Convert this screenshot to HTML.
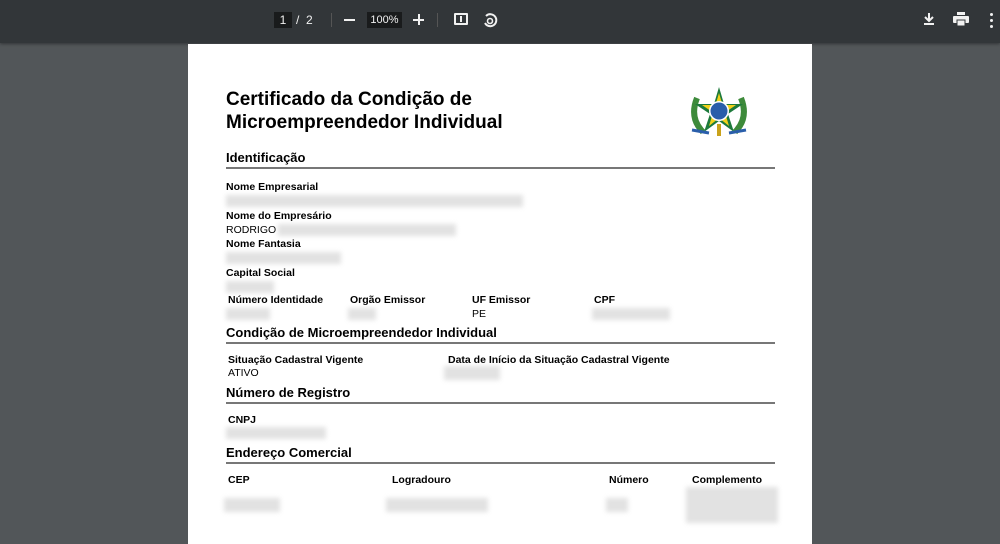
<!DOCTYPE html>
<html><head><style>
*{margin:0;padding:0;box-sizing:border-box}
body{width:1000px;height:524px;overflow:hidden;background:#525659;font-family:"Liberation Sans",Arial,sans-serif;position:relative}
.tb{position:absolute;left:0;top:0;width:1000px;height:43px;background:#323639;box-shadow:0 1px 3px rgba(0,0,0,.4);color:#f1f1f1;font-size:12px}
.tb div{position:absolute}
.page{position:absolute;left:188px;top:44px;width:624px;height:500px;background:#fff}
.a{position:absolute;white-space:nowrap;color:#000}
.h{font-weight:bold;font-size:13px}
.l{font-weight:bold;font-size:10.5px}
.v{font-size:10.5px}
.hr{position:absolute;left:38px;width:549px;height:2px;background:#777}
.b{position:absolute;background:#e2e2e2;filter:blur(2.5px);height:12px}
</style></head><body>
<div class="tb">
<div style="left:274px;top:12px;width:18px;height:16px;background:#191b1c;text-align:center;line-height:16px">1</div>
<div style="left:296px;top:12px;line-height:16px">/&nbsp;&nbsp;2</div>
<div style="left:331px;top:13px;width:1px;height:14px;background:#555"></div>
<div style="left:344px;top:19px;width:11px;height:2px;background:#f1f1f1"></div>
<div style="left:367px;top:12px;width:35px;height:16px;background:#191b1c;text-align:center;line-height:16px;font-size:11px">100%</div>
<div style="left:413px;top:19px;width:11px;height:2px;background:#f1f1f1"></div>
<div style="left:417.5px;top:14px;width:2px;height:11px;background:#f1f1f1"></div>
<div style="left:437px;top:13px;width:1px;height:14px;background:#555"></div>
<div style="left:454px;top:13px;width:14px;height:12px;border:2px solid #f1f1f1;border-radius:1px"></div>
<div style="left:460px;top:16px;width:2px;height:6px;background:#f1f1f1"></div>
<svg style="position:absolute;left:481px;top:11px" width="18" height="18" viewBox="0 0 18 18"><path d="M5 5 A6 6 0 1 1 4 12" fill="none" stroke="#f1f1f1" stroke-width="2"/><circle cx="9" cy="10" r="2.5" fill="none" stroke="#f1f1f1" stroke-width="1.6"/></svg>
<svg style="position:absolute;left:922px;top:12px" width="14" height="14" viewBox="0 0 14 14"><path d="M7 1v8M3 5l4 4 4-4M2 12h10" fill="none" stroke="#f1f1f1" stroke-width="2"/></svg>
<svg style="position:absolute;left:953px;top:12px" width="16" height="14" viewBox="0 0 16 14"><rect x="4" y="0" width="8" height="3" fill="#f1f1f1"/><rect x="0" y="4" width="16" height="7" rx="1" fill="#f1f1f1"/><rect x="4" y="8" width="8" height="6" fill="#f1f1f1" stroke="#323639"/></svg>
<div style="left:990px;top:13px;width:3px;height:3px;background:#f1f1f1;border-radius:50%;box-shadow:0 6px 0 #f1f1f1,0 12px 0 #f1f1f1"></div>
</div>
<div class="page">
<div class="a" style="left:38px;top:44px;font-size:19px;font-weight:bold;line-height:23px">Certificado da Condição de<br>Microempreendedor Individual</div>
<svg style="position:absolute;left:501px;top:40px" width="60" height="60" viewBox="0 0 60 60">
<path d="M8 14 Q0 34 14 48 M52 14 Q60 34 46 48" stroke="#3d8a3a" stroke-width="6" fill="none"/>
<polygon points="30,3 35,20 54,20 39,30 45,48 30,37 15,48 21,30 6,20 25,20" fill="#1d7a3b"/>
<polygon points="30,9 33.5,21 47,21 36,28.5 40,42 30,34 20,42 24,28.5 13,21 26.5,21" fill="#f2d21a"/>
<circle cx="30" cy="27" r="10" fill="#fff"/><circle cx="30" cy="27" r="8.5" fill="#2a5eaa"/>
<path d="M3 46 L20 49 M57 46 L40 49" stroke="#2a5eaa" stroke-width="3"/>
<rect x="28" y="40" width="4" height="12" fill="#c9a21a"/>
</svg>
<div class="a h" style="left:38px;top:106px">Identificação</div><div class="hr" style="top:123px"></div>
<div class="a l" style="left:38px;top:137px">Nome Empresarial</div><div class="b" style="left:38px;top:151px;width:297px"></div>
<div class="a l" style="left:38px;top:166px">Nome do Empresário</div><div class="a v" style="left:38px;top:180px">RODRIGO</div><div class="b" style="left:90px;top:180px;width:178px"></div>
<div class="a l" style="left:38px;top:194px">Nome Fantasia</div><div class="b" style="left:38px;top:208px;width:115px"></div>
<div class="a l" style="left:38px;top:223px">Capital Social</div><div class="b" style="left:38px;top:237px;width:48px"></div>
<div class="a l" style="left:40px;top:250px">Número Identidade</div><div class="b" style="left:38px;top:264px;width:44px"></div>
<div class="a l" style="left:162px;top:250px">Orgão Emissor</div><div class="b" style="left:160px;top:264px;width:28px"></div>
<div class="a l" style="left:284px;top:250px">UF Emissor</div><div class="a v" style="left:284px;top:264px">PE</div>
<div class="a l" style="left:406px;top:250px">CPF</div><div class="b" style="left:404px;top:264px;width:78px"></div>
<div class="a h" style="left:38px;top:281px">Condição de Microempreendedor Individual</div><div class="hr" style="top:298px"></div>
<div class="a l" style="left:40px;top:310px">Situação Cadastral Vigente</div><div class="a v" style="left:40px;top:323px">ATIVO</div>
<div class="a l" style="left:260px;top:310px">Data de Início da Situação Cadastral Vigente</div><div class="b" style="left:256px;top:322px;width:56px;height:14px"></div>
<div class="a h" style="left:38px;top:341px">Número de Registro</div><div class="hr" style="top:358px"></div>
<div class="a l" style="left:40px;top:370px">CNPJ</div><div class="b" style="left:38px;top:383px;width:100px"></div>
<div class="a h" style="left:38px;top:401px">Endereço Comercial</div><div class="hr" style="top:418px"></div>
<div class="a l" style="left:40px;top:430px">CEP</div><div class="b" style="left:36px;top:454px;width:56px;height:14px"></div>
<div class="a l" style="left:204px;top:430px">Logradouro</div><div class="b" style="left:198px;top:454px;width:102px;height:14px"></div>
<div class="a l" style="left:421px;top:430px">Número</div><div class="b" style="left:418px;top:454px;width:22px;height:14px"></div>
<div class="a l" style="left:504px;top:430px">Complemento</div><div class="b" style="left:498px;top:443px;width:92px;height:36px"></div>
</div>
</body></html>
